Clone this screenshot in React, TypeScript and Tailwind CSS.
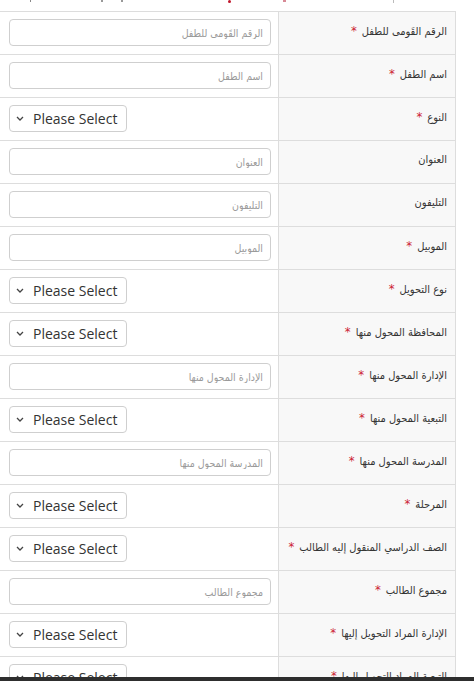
import React from "react";

type Field = {
  label: string;
  required?: boolean;
  kind: "input" | "select";
  placeholder?: string;
};

const fields: Field[] = [
  { label: "الرقم القَومى للطفل", required: true, kind: "input", placeholder: "الرقم القَومى للطفل" },
  { label: "اسم الطفل", required: true, kind: "input", placeholder: "اسم الطفل" },
  { label: "النوع", required: true, kind: "select" },
  { label: "العنوان", kind: "input", placeholder: "العنوان" },
  { label: "التليفون", kind: "input", placeholder: "التليفون" },
  { label: "الموبيل", required: true, kind: "input", placeholder: "الموبيل" },
  { label: "نوع التحويل", required: true, kind: "select" },
  { label: "المحافظة المحول منها", required: true, kind: "select" },
  { label: "الإدارة المحول منها", required: true, kind: "input", placeholder: "الإدارة المحول منها" },
  { label: "التبعية المحول منها", required: true, kind: "select" },
  { label: "المدرسة المحول منها", required: true, kind: "input", placeholder: "المدرسة المحول منها" },
  { label: "المرحلة", required: true, kind: "select" },
  { label: "الصف الدراسي المنقول إليه الطالب", required: true, kind: "select" },
  { label: "مجموع الطالب", required: true, kind: "input", placeholder: "مجموع الطالب" },
  { label: "الإدارة المراد التحويل إليها", required: true, kind: "select" },
  { label: "التبعية المراد التحويل إليها", required: true, kind: "select" },
];

const arabic = { fontFamily: '"DejaVu Sans Condensed", "DejaVu Sans", sans-serif' };

const SelectBox = () => (
  <div className="flex h-[27px] w-[118px] items-center rounded-[4px] border border-[#cfcfcf] bg-white">
    <svg width="8" height="5" viewBox="0 0 8 5" className="ml-[6px] shrink-0">
      <path d="M1 1l3 3l3-3" fill="none" stroke="#444" strokeWidth="1.3" />
    </svg>
    <span
      className="ml-[9px] whitespace-nowrap text-[14px] text-[#333]"
      style={{ fontFamily: '"Open Sans", "DejaVu Sans", sans-serif' }}
    >
      Please Select
    </span>
  </div>
);

const TextBox = ({ placeholder }: { placeholder?: string }) => (
  <input
    dir="rtl"
    placeholder={placeholder}
    className="block h-[27px] w-[262px] rounded-[4px] border border-[#cfcfcf] bg-white px-[7px] text-[10.5px] text-[#333] outline-none placeholder:text-[#9a9a9a]"
    style={arabic}
  />
);

const App = () => {
  return (
    <div className="relative h-[681px] w-[474px] overflow-hidden bg-white">
      <div className="flex h-[11px] items-start">
        <span className="ml-[30px] h-[2px] w-[1px] bg-[#888]" />
        <span className="ml-[70px] h-[2px] w-[2px] bg-[#999]" />
        <span className="ml-[18px] h-[2px] w-[2px] bg-[#999]" />
        <span className="ml-[105px] h-[3px] w-[3px] rounded-full bg-[#c0162b]" />
        <span className="ml-[52px] h-[2px] w-[3px] bg-[#d88a96]" />
        <span className="ml-[107px] h-[3px] w-[1px] bg-[#bbb]" />
      </div>
      <div className="w-[456px] border-t border-r border-[#dddddd]">
        {fields.map((f, i) => (
          <div
            key={i}
            className="grid h-[43px] grid-cols-[278px_177px] border-b border-[#dddddd]"
          >
            <div className="pl-[9px] pt-[7px]">
              {f.kind === "input" ? <TextBox placeholder={f.placeholder} /> : <SelectBox />}
            </div>
            <div
              dir="rtl"
              className="border-l border-[#dddddd] bg-[#f8f8f8] pr-[8px] pt-[11px] text-[11px] leading-[16px] whitespace-nowrap text-[#333]"
              style={arabic}
            >
              {f.label}
              {f.required && <span className="mr-[5px] text-[13px] text-[#cc2233]">*</span>}
            </div>
          </div>
        ))}
      </div>
      <div className="absolute bottom-0 left-0 h-[4px] w-full bg-[#2e2e2e]" />
    </div>
  );
};

export default App;
